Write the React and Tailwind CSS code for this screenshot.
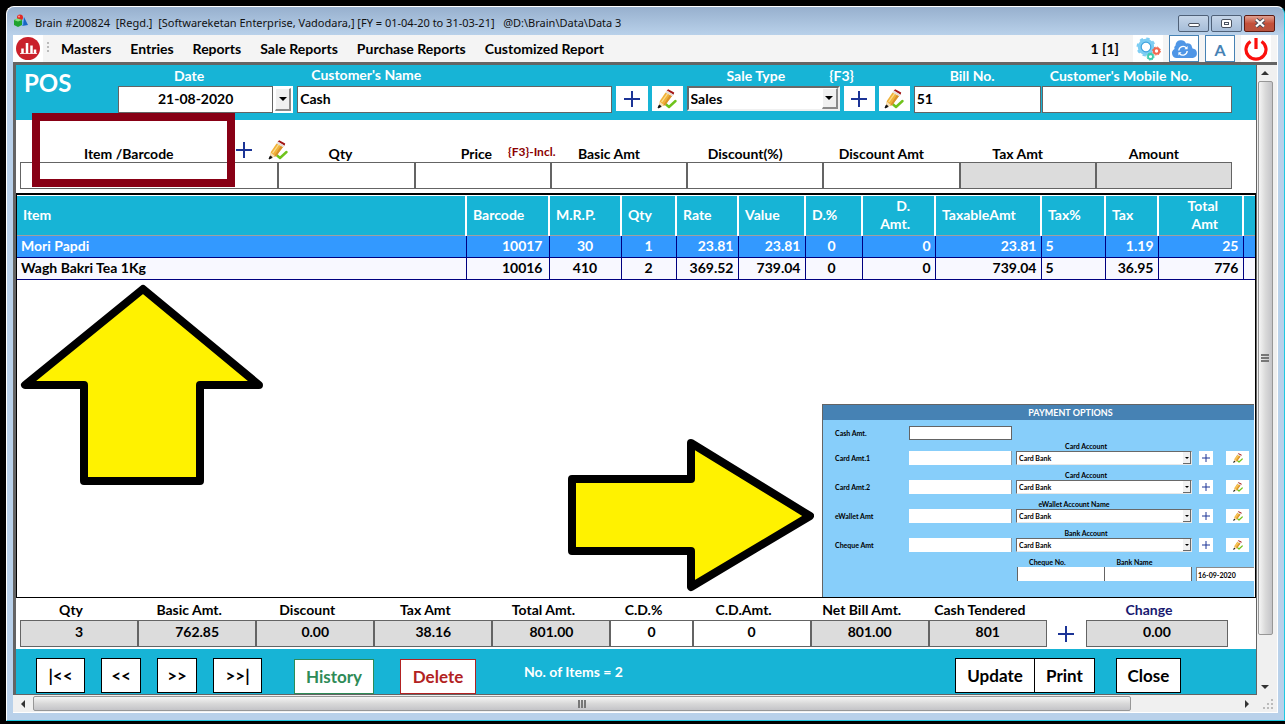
import React from "react";

const accounts = [
  { id: "card1", label: "Card Amt.1", account: "Card Account", accountClass: "pr-8" },
  { id: "card2", label: "Card Amt.2", account: "Card Account", accountClass: "pr-8" },
  { id: "ewallet", label: "eWallet Amt", account: "eWallet Account Name", accountClass: "pr-14" },
  { id: "cheque", label: "Cheque Amt", account: "Bank Account", accountClass: "pr-8" },
];

const columns = [
  { name: "Item", width: "w-[449px]", head: "text-left pl-1.5", cell: "text-left pl-1" },
  { name: "Barcode", width: "w-[83px]", head: "text-left pl-1.5", cell: "text-right pr-1.5" },
  { name: "M.R.P.", width: "w-[72px]", head: "text-left pl-1.5", cell: "text-center" },
  { name: "Qty", width: "w-[55px]", head: "text-left pl-1.5", cell: "text-center" },
  { name: "Rate", width: "w-[62px]", head: "text-left pl-1.5", cell: "text-right pr-1" },
  { name: "Value", width: "w-[67px]", head: "text-left pl-1.5", cell: "text-right pr-1" },
  { name: "D.%", width: "w-[57px]", head: "text-left pl-1.5", cell: "text-center pr-1" },
  { name: "D. Amt.", width: "w-[73px]", head: "text-right pl-3 pr-6", cell: "text-right pr-1" },
  { name: "TaxableAmt", width: "w-[106px]", head: "text-left pl-1.5", cell: "text-right pr-1" },
  { name: "Tax%", width: "w-[64px]", head: "text-left pl-1.5", cell: "text-left pl-1" },
  { name: "Tax", width: "w-[53px]", head: "text-left pl-1.5", cell: "text-right pr-1" },
  { name: "Total Amt", width: "w-[85px]", head: "text-right pl-5 pr-6", cell: "text-right pr-1" },
  { name: "", width: "w-[12px]", head: "", cell: "" },
];

const rows = [
  ["Mori Papdi", "10017", "30", "1", "23.81", "23.81", "0", "0", "23.81", "5", "1.19", "25", ""],
  ["Wagh Bakri Tea 1Kg", "10016", "410", "2", "369.52", "739.04", "0", "0", "739.04", "5", "36.95", "776", ""],
];

const totals = [
  { label: "Qty", value: "3", grey: true },
  { label: "Basic Amt.", value: "762.85", grey: true },
  { label: "Discount", value: "0.00", grey: true },
  { label: "Tax Amt", value: "38.16", grey: true },
  { label: "Total Amt.", value: "801.00", grey: true },
  { label: "C.D.%", value: "0", grey: false },
  { label: "C.D.Amt.", value: "0", grey: false },
  { label: "Net Bill Amt.", value: "801.00", grey: true },
  { label: "Cash Tendered", value: "801", grey: true },
];

const PlusIcon = ({ className }) => (
  <svg viewBox="0 0 16 16" className={className} aria-hidden="true">
    <path d="M8 0v16M0 8h16" stroke="#1c3496" strokeWidth="2" fill="none" />
  </svg>
);

const PencilIcon = ({ className }) => (
  <svg viewBox="0 0 20 20" className={className} aria-hidden="true">
    <path d="M8 14.5l4 3.5 6.5-6" stroke="#6fc31c" strokeWidth="2.4" fill="none" strokeLinecap="round" strokeLinejoin="round" />
    <path d="M8.5 3.5l6.5 3.6-6.7 9L2 18.2l.8-6.2z" fill="#f0b23a" />
    <path d="M12.8 5.9l2.2 1.2-6.7 9-2.6 0.8z" fill="#d9902a" />
    <path d="M10.6 4.6l-6 8.6" stroke="#fbdc8a" strokeWidth="1.2" />
    <path d="M2.8 12.8l4.4 3.4-5.2 2z" fill="#f8e2bd" />
    <path d="M2.3 16l1.9 1.5L1 19z" fill="#111" stroke="#111" />
    <path d="M9.7 1.6l1.5-1.3 6 3.3-.6 2.2z" fill="#a31515" />
    <path d="M9.7 1.6l6.9 4.2-1.2 1.4-6.9-3.8z" fill="#e5ddd8" />
  </svg>
);

const BrainIcon = () => (
  <svg viewBox="0 0 16 16" className="h-4 w-4" aria-hidden="true">
    <path d="M11 4l4 8-6 1z" fill="#1766c5" />
    <path d="M11 4l-3 7 2 2z" fill="#6db8ee" />
    <circle cx="7" cy="4.5" r="3" fill="#e22a26" />
    <circle cx="6" cy="3.6" r="1" fill="#ff9d8d" />
    <path d="M1 7l3.5-1.5L9 7v5l-4 2-4-2z" fill="#1fa32e" />
    <path d="M1 7l3.5-1.5L9 7 5 8.5z" fill="#8ae082" />
  </svg>
);

const ChartLogo = () => (
  <svg viewBox="0 0 30 27" className="h-full w-[30px] bg-white" aria-hidden="true">
    <ellipse cx="15" cy="13.5" rx="12" ry="11.5" fill="#c9202b" />
    <path d="M9.5 18.5v-5M14 18.5V8M18.5 18.5v-8M22 18.5v-4" stroke="#fff" strokeWidth="2.5" />
    <path d="M7 18.5h17" stroke="#fff" strokeWidth="0.8" />
  </svg>
);

const GearsIcon = () => (
  <svg viewBox="0 0 30 26" className="h-[26px] w-[30px]" aria-hidden="true">
    <circle cx="13" cy="11" r="6.5" fill="none" stroke="#7dcdf3" strokeWidth="3.5" />
    <circle cx="13" cy="11" r="8.5" fill="none" stroke="#7dcdf3" strokeWidth="2" strokeDasharray="3.34 3.34" />
    <circle cx="13" cy="11" r="4.8" fill="none" stroke="#3fa4de" strokeWidth="1.2" />
    <circle cx="23.5" cy="15" r="2.7" fill="none" stroke="#f2684f" strokeWidth="2" />
    <circle cx="23.5" cy="15" r="4" fill="none" stroke="#f2684f" strokeWidth="1" strokeDasharray="1.57 1.57" />
    <circle cx="17.5" cy="20.5" r="2.5" fill="none" stroke="#3fcdb0" strokeWidth="1.8" />
    <circle cx="17.5" cy="20.5" r="3.6" fill="none" stroke="#3fcdb0" strokeWidth="1" strokeDasharray="1.41 1.41" />
  </svg>
);

const CloudIcon = () => (
  <svg viewBox="0 0 28 25" className="h-[25px] w-7" aria-hidden="true">
    <path d="M6.500 22a4.800 4.800 0 0 1-2-9 2.800 2.800 0 0 1 1-3.500 5.500 5.500 0 0 1 10.500-2 4.500 4.500 0 0 1 6 3.500l.5 1.500a4.800 4.800 0 0 1 .5 9.500z" fill="#4f96e6" />
    <path d="M8.800 14.500a4.300 4.300 0 0 1 7.600-2.500M17.200 15a4.300 4.300 0 0 1-7.600 2.600" fill="none" stroke="#fff" strokeWidth="1.300" />
    <path d="M17.600 10v3.200h-3.200zM8.400 19.500v-3.200h3.200z" fill="#fff" />
  </svg>
);

const PowerIcon = () => (
  <svg viewBox="0 0 24 24" className="h-6 w-6" aria-hidden="true">
    <path d="M6.500 4.500a10 9.600 0 1 0 11 0M12 1v11" fill="none" stroke="#fb0f0c" strokeWidth="3.200" />
  </svg>
);

// Grey classic drop-down handle
const DropHandle = ({ small }) => (
  <span
    className={
      small
        ? "pointer-events-none absolute inset-y-px right-px flex w-2 items-center justify-center border-r border-b border-[#696969] bg-[#f0f0f0]"
        : "pointer-events-none absolute inset-y-0.5 right-0.5 flex w-4 items-center justify-center border-t border-r-2 border-b-2 border-l border-[#8a8a8a] border-t-white border-l-white bg-[#f0f0f0]"
    }
  >
    <svg viewBox="0 0 8 4" className={small ? "h-0.5 w-1" : "h-1 w-2"} aria-hidden="true">
      <path d="M0 0h8L4 4z" fill="#000" />
    </svg>
  </span>
);

const IconButton = ({ label, className, children }) => (
  <button type="button" aria-label={label} className={`flex items-center justify-center bg-white ${className}`}>
    {children}
  </button>
);

const EntryField = ({ id, label, grey, labelClass = "justify-center pr-5", children }) => (
  <div className="flex min-w-0 flex-col justify-end">
    <div className={`flex items-end leading-4 whitespace-nowrap ${labelClass}`}>
      <label htmlFor={id}>{label}</label>
      {children}
    </div>
    <input id={id} readOnly={grey} className={`h-[27px] w-full border border-[#646464] px-1 ${grey ? "bg-[#dcdcdc]" : "bg-white"}`} />
  </div>
);

const TotalField = ({ label, value, grey, labelClass = "" }) => (
  <div className="flex min-w-0 flex-col">
    <label htmlFor={`total-${label}`} className={`pr-4 text-center leading-5 whitespace-nowrap ${labelClass}`}>
      {label}
    </label>
    <input
      id={`total-${label}`}
      defaultValue={value}
      readOnly={grey}
      className={`h-[27px] w-full border border-[#646464] pb-1 text-center ${grey ? "bg-[#dcdcdc]" : "bg-white"}`}
    />
  </div>
);

const TitleBar = () => (
  <header className="flex h-7 items-center rounded-t-lg bg-linear-to-b from-[#97b0ce] to-[#b9d1ea] pr-[9px] pl-1.5">
    <BrainIcon />
    <h1 className="ml-1.5 pt-1 font-['Noto_Sans','Open_Sans',sans-serif] text-[11px] font-normal whitespace-pre text-[#111]">
      {"Brain #200824  [Regd.]  [Softwareketan Enterprise, Vadodara,] [FY = 01-04-20 to 31-03-21]   @D:\\Brain\\Data\\Data 3"}
    </h1>
    <div className="ml-auto flex gap-0.5 pt-1">
      <button type="button" aria-label="Minimize" className="flex h-[17px] w-[31px] items-center justify-center rounded-xs border border-[#4f6178] bg-linear-to-b from-[#c5d5e8] to-[#a6bdd8] pt-1">
        <span className="h-1 w-3 rounded-xs border border-[#4a5260] bg-white" />
      </button>
      <button type="button" aria-label="Maximize" className="flex h-[17px] w-[31px] items-center justify-center rounded-xs border border-[#4f6178] bg-linear-to-b from-[#c5d5e8] to-[#a6bdd8]">
        <span className="flex h-[9px] w-[11px] items-center justify-center rounded-xs border border-[#4a5260] bg-white">
          <span className="h-[3px] w-[5px] border border-[#4a5260]" />
        </span>
      </button>
      <button type="button" aria-label="Close window" className="flex h-[17px] w-[31px] items-center justify-center rounded-xs border border-[#5c1a12] bg-linear-to-b from-[#e0a091] via-[#c4503a] to-[#b9543f]">
        <svg viewBox="0 0 12 10" className="h-2.5 w-3" aria-hidden="true">
          <path d="M2 1.500l8 7M10 1.500l-8 7" stroke="#4a4a55" strokeWidth="4" />
          <path d="M2 1.500l8 7M10 1.500l-8 7" stroke="#fff" strokeWidth="2.300" />
        </svg>
      </button>
    </div>
  </header>
);

const MenuBar = () => (
  <nav className="flex h-[27px] items-center bg-[#f4f4f4] pr-1.5 text-sm">
    <ChartLogo />
    <span className="ml-1 flex flex-col gap-0.5 pb-1">
      <i className="h-0.5 w-0.5 bg-[#bbb]" />
      <i className="h-0.5 w-0.5 bg-[#bbb]" />
      <i className="h-0.5 w-0.5 bg-[#bbb]" />
    </span>
    <div className="ml-3 flex gap-[19px]">
      {["Masters", "Entries", "Reports", "Sale Reports", "Purchase Reports", "Customized Report"].map((item) => (
        <button key={item} type="button">{item}</button>
      ))}
    </div>
    <span className="ml-auto">1 [1]</span>
    <div className="ml-3.5 flex h-full items-stretch gap-1.5">
      <IconButton label="Settings" className="w-[30px]"><GearsIcon /></IconButton>
      <IconButton label="Cloud sync" className="w-[30px] border border-[#4682b4]"><CloudIcon /></IconButton>
      <IconButton label="Font" className="w-[30px] border border-[#4682b4] pt-0.5 text-base text-[#4682b4]">A</IconButton>
      <IconButton label="Exit" className="w-[30px]"><PowerIcon /></IconButton>
    </div>
  </nav>
);

const BillHeader = () => (
  <section className="grid grid-cols-[98fr_175fr_315fr_31fr_31fr_153fr_31fr_31fr_318fr_20fr] items-end gap-x-1 bg-[#17b4d6] pb-[7px] text-sm text-white *:min-w-0">
    <h2 className="self-start pt-1 pl-2 text-2xl leading-7">POS</h2>
    <div>
      <label htmlFor="date" className="block h-[21px] pl-14 leading-[22px]">Date</label>
      <div className="flex h-[27px] bg-white text-black">
        <input id="date" defaultValue="21-08-2020" className="min-w-0 flex-1 border border-[#646464] pb-0.5 text-center" />
        <button type="button" aria-label="Pick a date" className="relative w-5"><DropHandle /></button>
      </div>
    </div>
    <div>
      <label htmlFor="customer" className="block h-[21px] pl-3.5 leading-5">Customer&#39;s Name</label>
      <input id="customer" defaultValue="Cash" className="block h-[27px] w-full border border-[#646464] bg-white px-0.5 pb-0.5 text-black" />
    </div>
    <IconButton label="Add customer" className="mb-0.5 h-[25px]"><PlusIcon className="h-4 w-4" /></IconButton>
    <IconButton label="Edit customer" className="mb-0.5 h-[25px]"><PencilIcon className="h-5 w-5" /></IconButton>
    <div>
      <div className="flex h-[21px] gap-11 pl-10 leading-[22px] whitespace-nowrap">
        <label htmlFor="sale-type">Sale Type</label>
        <span>{"{F3}"}</span>
      </div>
      <div className="relative mb-0.5 h-[25px]">
        <select id="sale-type" className="h-full w-full appearance-none border-2 border-[#f0f0f0] border-t-[#696969] border-l-[#696969] bg-white px-0.5 text-black">
          <option>Sales</option>
        </select>
        <DropHandle />
      </div>
    </div>
    <IconButton label="Add sale type" className="mb-0.5 h-[25px]"><PlusIcon className="h-4 w-4" /></IconButton>
    <IconButton label="Edit sale type" className="mb-0.5 h-[25px]"><PencilIcon className="h-5 w-5" /></IconButton>
    <div className="grid grid-cols-[127fr_190fr] gap-x-px *:min-w-0">
      <div>
        <label htmlFor="bill-no" className="block h-[21px] pl-9 leading-[22px]">Bill No.</label>
        <input id="bill-no" defaultValue="51" className="block h-[27px] w-full border border-[#646464] bg-white px-0.5 pb-0.5 text-black" />
      </div>
      <div>
        <label htmlFor="mobile" className="block h-[21px] pl-2 leading-[22px] whitespace-nowrap">Customer&#39;s Mobile No.</label>
        <input id="mobile" className="block h-[27px] w-full border border-[#646464] bg-white px-0.5 text-black" />
      </div>
    </div>
  </section>
);

const ItemEntry = () => (
  <section className="relative grid h-[73px] grid-cols-[258fr_repeat(7,136fr)] bg-white pr-6 pb-1 pl-1 text-sm">
    <EntryField id="item" label="Item /Barcode" labelClass="pl-16">
      <button type="button" aria-label="Add item" className="ml-auto"><PlusIcon className="mb-1 h-4 w-4" /></button>
      <button type="button" aria-label="Edit item" className="-mr-2.5 ml-4"><PencilIcon className="mb-0.5 h-5 w-5" /></button>
    </EntryField>
    <EntryField id="qty" label="Qty" labelClass="justify-center pr-3" />
    <EntryField id="price" label="Price" labelClass="pl-[46px]">
      <span className="ml-4 pb-0.5 text-xs leading-4 text-[#8b0000]">{"{F3}-Incl."}</span>
    </EntryField>
    <EntryField id="basic" label="Basic Amt" />
    <EntryField id="discount-pct" label="Discount(%)" />
    <EntryField id="discount-amt" label="Discount Amt" />
    <EntryField id="tax" label="Tax Amt" grey />
    <EntryField id="amount" label="Amount" grey />
    {/* highlight frame over the barcode box */}
    <div className="pointer-events-none absolute -top-[7px] left-4 h-[74px] w-[203px] border-8 border-[#880015]" />
  </section>
);

const ItemTable = () => (
  <table className="w-full table-fixed border-collapse text-sm">
    <colgroup>
      {columns.map((c, i) => <col key={i} className={c.width} />)}
    </colgroup>
    <thead>
      <tr className="h-10 bg-[#17b4d6] leading-[18px] text-white">
        {columns.map((c, i) => (
          <th key={i} className={`border-t border-r-2 border-b border-t-white border-r-white border-b-[#a0a0a0] pt-0 pb-0.5 font-bold last:border-r-0 ${c.head}`}>{c.name}</th>
        ))}
      </tr>
    </thead>
    <tbody>
      {rows.map((row, r) => (
        <tr key={r} className={`h-[22px] leading-[18px] ${r === 0 ? "bg-[#3399ff] text-white" : "bg-[#f8f8ff] text-black"}`}>
          {row.map((value, i) => (
            <td key={i} className={`border-r border-b border-[#000080] pt-0 pb-0.5 last:border-r-0 ${columns[i].cell}`}>{value}</td>
          ))}
        </tr>
      ))}
    </tbody>
  </table>
);

const PaymentRow = ({ id, label, account, accountClass }) => (
  <div className="grid grid-cols-[74px_103px_176px_14px_23px] items-end">
    <span className="col-span-2" />
    <label htmlFor={`${id}-account`} className={`ml-1 h-[11px] text-center leading-3 whitespace-nowrap ${accountClass}`}>{account}</label>
    <span className="col-span-2" />
    <label htmlFor={id} className="leading-[14px]">{label}</label>
    <input id={id} className="h-[14px] w-full border-r border-[#8a9aa8] bg-white" />
    <div className="relative ml-1 h-[14px] w-[176px]">
      <select id={`${id}-account`} className="block h-full w-full appearance-none border border-[#e8e8e8] border-t-[#696969] border-l-[#696969] bg-white px-0.5 leading-3">
        <option>Card Bank</option>
      </select>
      <DropHandle small />
    </div>
    <IconButton label={`Add ${account}`} className="ml-[11px] h-[14px] w-[14px]"><PlusIcon className="h-2 w-2" /></IconButton>
    <IconButton label={`Edit ${account}`} className="ml-6 h-[14px] w-[23px]"><PencilIcon className="h-2.5 w-2.5" /></IconButton>
  </div>
);

const PaymentOptions = () => (
  <section className="w-[432px] overflow-hidden border-t border-l border-[#646464] bg-[#87cefa] text-[7px]">
    <h3 className="h-[15px] bg-[#4682b4] pl-16 text-center text-[9px] leading-[15px] text-white">PAYMENT OPTIONS</h3>
    <div className="flex flex-col pt-1.5 pb-4 pl-3">
      <div className="grid grid-cols-[74px_103px]">
        <label htmlFor="cash" className="leading-[14px]">Cash Amt.</label>
        <input id="cash" className="h-[14px] w-full border border-[#646464] bg-white" />
      </div>
      <div className="flex flex-col gap-1">
        {accounts.map((a) => <PaymentRow key={a.id} {...a} />)}
        <div className="ml-[182px] flex">
          <div className="w-[88px]">
            <label htmlFor="cheque-no" className="block h-[11px] pl-3 leading-3">Cheque No.</label>
            <input id="cheque-no" className="block h-[14px] w-full border-r border-l border-[#646464] bg-white" />
          </div>
          <div className="w-[88px]">
            <label htmlFor="bank-name" className="block h-[11px] pl-3 leading-3">Bank Name</label>
            <input id="bank-name" className="block h-[14px] w-full border-r border-[#646464] bg-white" />
          </div>
          <input aria-label="Cheque date" defaultValue="16-09-2020" className="mt-[11px] ml-1 h-[14px] w-[58px] border-t border-l border-[#8a8a8a] bg-white px-px text-[7px]" />
        </div>
      </div>
    </div>
  </section>
);

const WorkArea = () => (
  <section className="flex flex-1 flex-col border border-t-2 border-black bg-white">
    <ItemTable />
    <div className="flex flex-1 pr-px">
      <svg viewBox="0 0 248 204" className="mt-[3px] ml-px h-[204px] w-[248px]" aria-hidden="true">
        <path d="M125 6L7 102h59v96h116v-96h59z" fill="#fff200" stroke="#000" strokeWidth="8" strokeLinejoin="round" />
      </svg>
      <svg viewBox="0 0 248 156" className="mt-auto mr-2 mb-[5px] ml-auto h-[156px] w-[248px]" aria-hidden="true">
        <path d="M6 43h119V7l119 73-119 71v-36H6z" fill="#fff200" stroke="#000" strokeWidth="8" strokeLinejoin="round" />
      </svg>
      <div className="mt-auto"><PaymentOptions /></div>
    </div>
  </section>
);

const Totals = () => (
  <section className="grid grid-cols-[repeat(5,118fr)_82fr_repeat(3,118fr)_39fr_142fr] items-end bg-white pt-0.5 pr-7 pb-0.5 pl-1 text-sm">
    {totals.map((t) => <TotalField key={t.label} {...t} />)}
    <button type="button" aria-label="Add tender" className="flex h-[27px] items-center justify-center"><PlusIcon className="h-4 w-4" /></button>
    <TotalField label="Change" value="0.00" grey labelClass="text-[#191970]" />
  </section>
);

const FooterBar = () => {
  const nav = "h-[35px] border border-black bg-white text-black";
  return (
    <footer className="flex bg-[#17b4d6] pt-[9px] pr-[75px] pl-5 text-[17px]">
      <div className="flex gap-4">
        <button type="button" aria-label="First" className={`${nav} w-[49px]`}>|&lt;&lt;</button>
        <button type="button" aria-label="Previous" className={`${nav} w-10`}>&lt;&lt;</button>
        <button type="button" aria-label="Next" className={`${nav} w-10`}>&gt;&gt;</button>
        <button type="button" aria-label="Last" className={`${nav} w-[49px]`}>&gt;&gt;|</button>
      </div>
      <button type="button" className="mt-px ml-8 h-[35px] w-20 border border-[#2e8b57] bg-white text-[#2e8b57]">History</button>
      <button type="button" className="mt-px ml-[26px] h-[35px] w-[76px] border border-[#b22222] bg-white text-[#b22222]">Delete</button>
      <span className="ml-12 pt-1 text-sm text-white">No. of Items = 2</span>
      <div className="ml-auto flex">
        <button type="button" className={`${nav} w-20`}>Update</button>
        <button type="button" className={`${nav} w-[60px] border-l-0`}>Print</button>
        <button type="button" className={`${nav} ml-[21px] w-[65px]`}>Close</button>
      </div>
    </footer>
  );
};

const Arrow = ({ d }) => (
  <svg viewBox="0 0 8 8" className="h-2 w-2 shrink-0" aria-hidden="true"><path d={d} fill="#333" /></svg>
);

const VerticalScroll = () => (
  <div className="flex w-5 flex-col items-center bg-[#f0f0f0] py-1 pr-1">
    <Arrow d="M0 6h8L4 2z" />
    <div className="mt-1 flex w-[15px] flex-1 flex-col items-center justify-center gap-px rounded-xs border border-[#979797] bg-linear-to-r from-[#f5f5f5] via-[#d9d9d9] to-[#c4c4c8]">
      <i className="h-0.5 w-2 bg-[#777]" />
      <i className="h-0.5 w-2 bg-[#777]" />
      <i className="h-0.5 w-2 bg-[#777]" />
    </div>
    <div className="h-12" />
    <Arrow d="M0 2h8L4 6z" />
  </div>
);

const HorizontalScroll = () => (
  <div className="flex h-[17px] items-center bg-[#f0f0f0] pr-1">
    <div className="flex flex-1 items-center pr-1 pl-1.5">
      <Arrow d="M6 0v8L2 4z" />
      <div className="ml-1.5 flex h-[15px] flex-1 items-center justify-center gap-px rounded-xs border border-[#979797] bg-linear-to-b from-[#f5f5f5] via-[#d9d9d9] to-[#c4c4c8]">
        <i className="h-2 w-0.5 bg-[#777]" />
        <i className="h-2 w-0.5 bg-[#777]" />
        <i className="h-2 w-0.5 bg-[#777]" />
      </div>
      <div className="w-28" />
      <Arrow d="M2 0v8l4-4z" />
    </div>
    <svg viewBox="0 0 10 10" className="ml-2 h-2.5 w-2.5" aria-hidden="true">
      <path d="M8 0h2v2H8zM8 4h2v2H8zM8 8h2v2H8zM4 4h2v2H4zM4 8h2v2H4zM0 8h2v2H0z" fill="#bbb" />
    </svg>
  </div>
);

export default function App() {
  return (
    <div className="flex min-h-screen bg-black pt-1.5 pr-px pb-[3px] pl-1.5 font-[Lato,'Open_Sans',sans-serif] font-bold text-black">
      <div className="flex flex-1 flex-col rounded-t-lg border border-[#1fc8e0] border-t-white border-l-white bg-[#b9d1ea]">
        <TitleBar />
        <div className="mx-1.5 mb-[7px] flex flex-1 flex-col border-r border-b border-white bg-[#f0f0f0]">
          <MenuBar />
          <div className="flex flex-1 border-t-3 border-[#646464]">
            <div className="flex min-w-0 flex-1 flex-col border-r border-b border-l-3 border-[#646464]">
              <BillHeader />
              <ItemEntry />
              <WorkArea />
              <Totals />
              <FooterBar />
            </div>
            <VerticalScroll />
          </div>
          <HorizontalScroll />
        </div>
      </div>
    </div>
  );
}
